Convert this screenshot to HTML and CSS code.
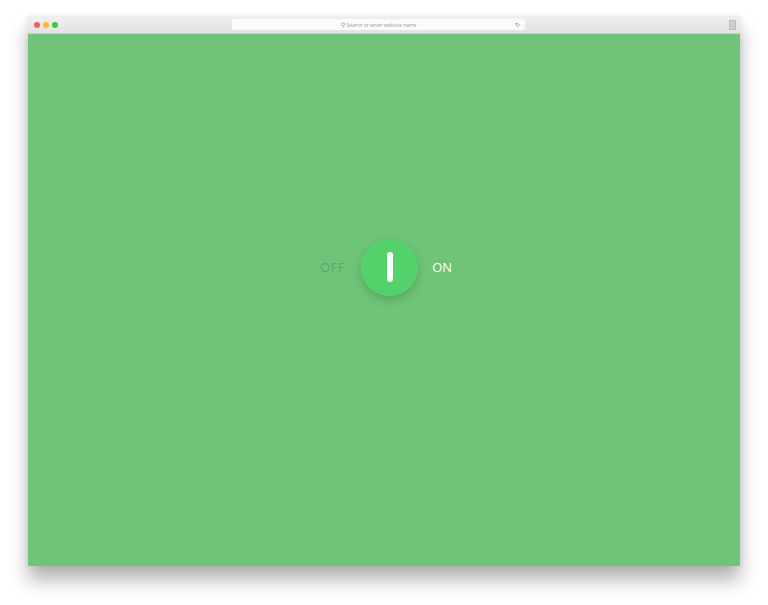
FILE: index.html
```html
<!DOCTYPE html>
<html>
  <head>
    <link rel="stylesheet" href="styles.css">
  </head>
  <body>
    <div class="window">
      <div class="titlebar">
        <div class="dots">
          <span class="dot red"></span>
          <span class="dot yellow"></span>
          <span class="dot green"></span>
        </div>
        <div class="address">
          <span class="search-ico">&#9906;</span>
          <span class="address-text">Search or enter website name</span>
          <span class="reload">&#8635;</span>
        </div>
        <div class="tab-btn"></div>
      </div>
      <div class="content">
        <div class="switch">
          <span class="label off">OFF</span>
          <button class="knob"><span class="bar"></span></button>
          <span class="label on">ON</span>
        </div>
      </div>
    </div>
  </body>
</html>
```

FILE: styles.css
```css
* {
  box-sizing: border-box;
}
html, body {
  height: 100%;
}
body {
  margin: 0;
  padding: 16px 0 0 28px;
  background-color: #ffffff;
  font-family: "Open Sans", "Liberation Sans", sans-serif;
}
.window {
  width: 712px;
  box-shadow: 0 14px 18px rgba(0, 0, 0, 0.3), 0 0 6px rgba(0, 0, 0, 0.08);
}
.titlebar {
  height: 18px;
  background: linear-gradient(#f0f0f0, #e2e2e2);
  border-bottom: 1px solid #cfcfcf;
  display: flex;
  align-items: center;
  padding: 0 4px 0 6px;
}
.dots {
  display: flex;
  gap: 3px;
  width: 198px;
}
.dot {
  width: 6px;
  height: 6px;
  border-radius: 50%;
}
.red { background-color: #f25f58; }
.yellow { background-color: #f9be2f; }
.green { background-color: #3ec744; }
.address {
  width: 293px;
  height: 11px;
  background-color: #fbfbfb;
  border-radius: 2px;
  display: flex;
  align-items: center;
  justify-content: center;
  position: relative;
  font-size: 5px;
  color: #9a9a9a;
}
.search-ico {
  font-size: 6px;
  margin-right: 2px;
}
.reload {
  position: absolute;
  right: 5px;
  font-size: 6px;
  color: #888;
}
.tab-btn {
  margin-left: auto;
  width: 7px;
  height: 10px;
  background-color: #cfcfcf;
  border: 1px solid #bdbdbd;
}
.content {
  height: 532px;
  background-color: #70c47a;
  display: flex;
  align-items: center;
  justify-content: center;
  padding: 0 0 66px 4px;
}
.switch {
  display: flex;
  align-items: center;
  gap: 14px;
}
.label {
  font-size: 13px;
  font-weight: 400;
}
.off {
  color: #5ba865;
  letter-spacing: 0.6px;
  margin-right: 2px;
}
.on {
  color: #ffffff;
}
.knob {
  width: 57px;
  height: 57px;
  border-radius: 50%;
  border: none;
  padding: 0;
  background-color: #53d26b;
  box-shadow: 0 4px 10px rgba(40, 110, 50, 0.35);
  display: flex;
  align-items: center;
  justify-content: center;
}
.bar {
  width: 6px;
  height: 30px;
  border-radius: 3px;
  background-color: #ffffff;
}
```
